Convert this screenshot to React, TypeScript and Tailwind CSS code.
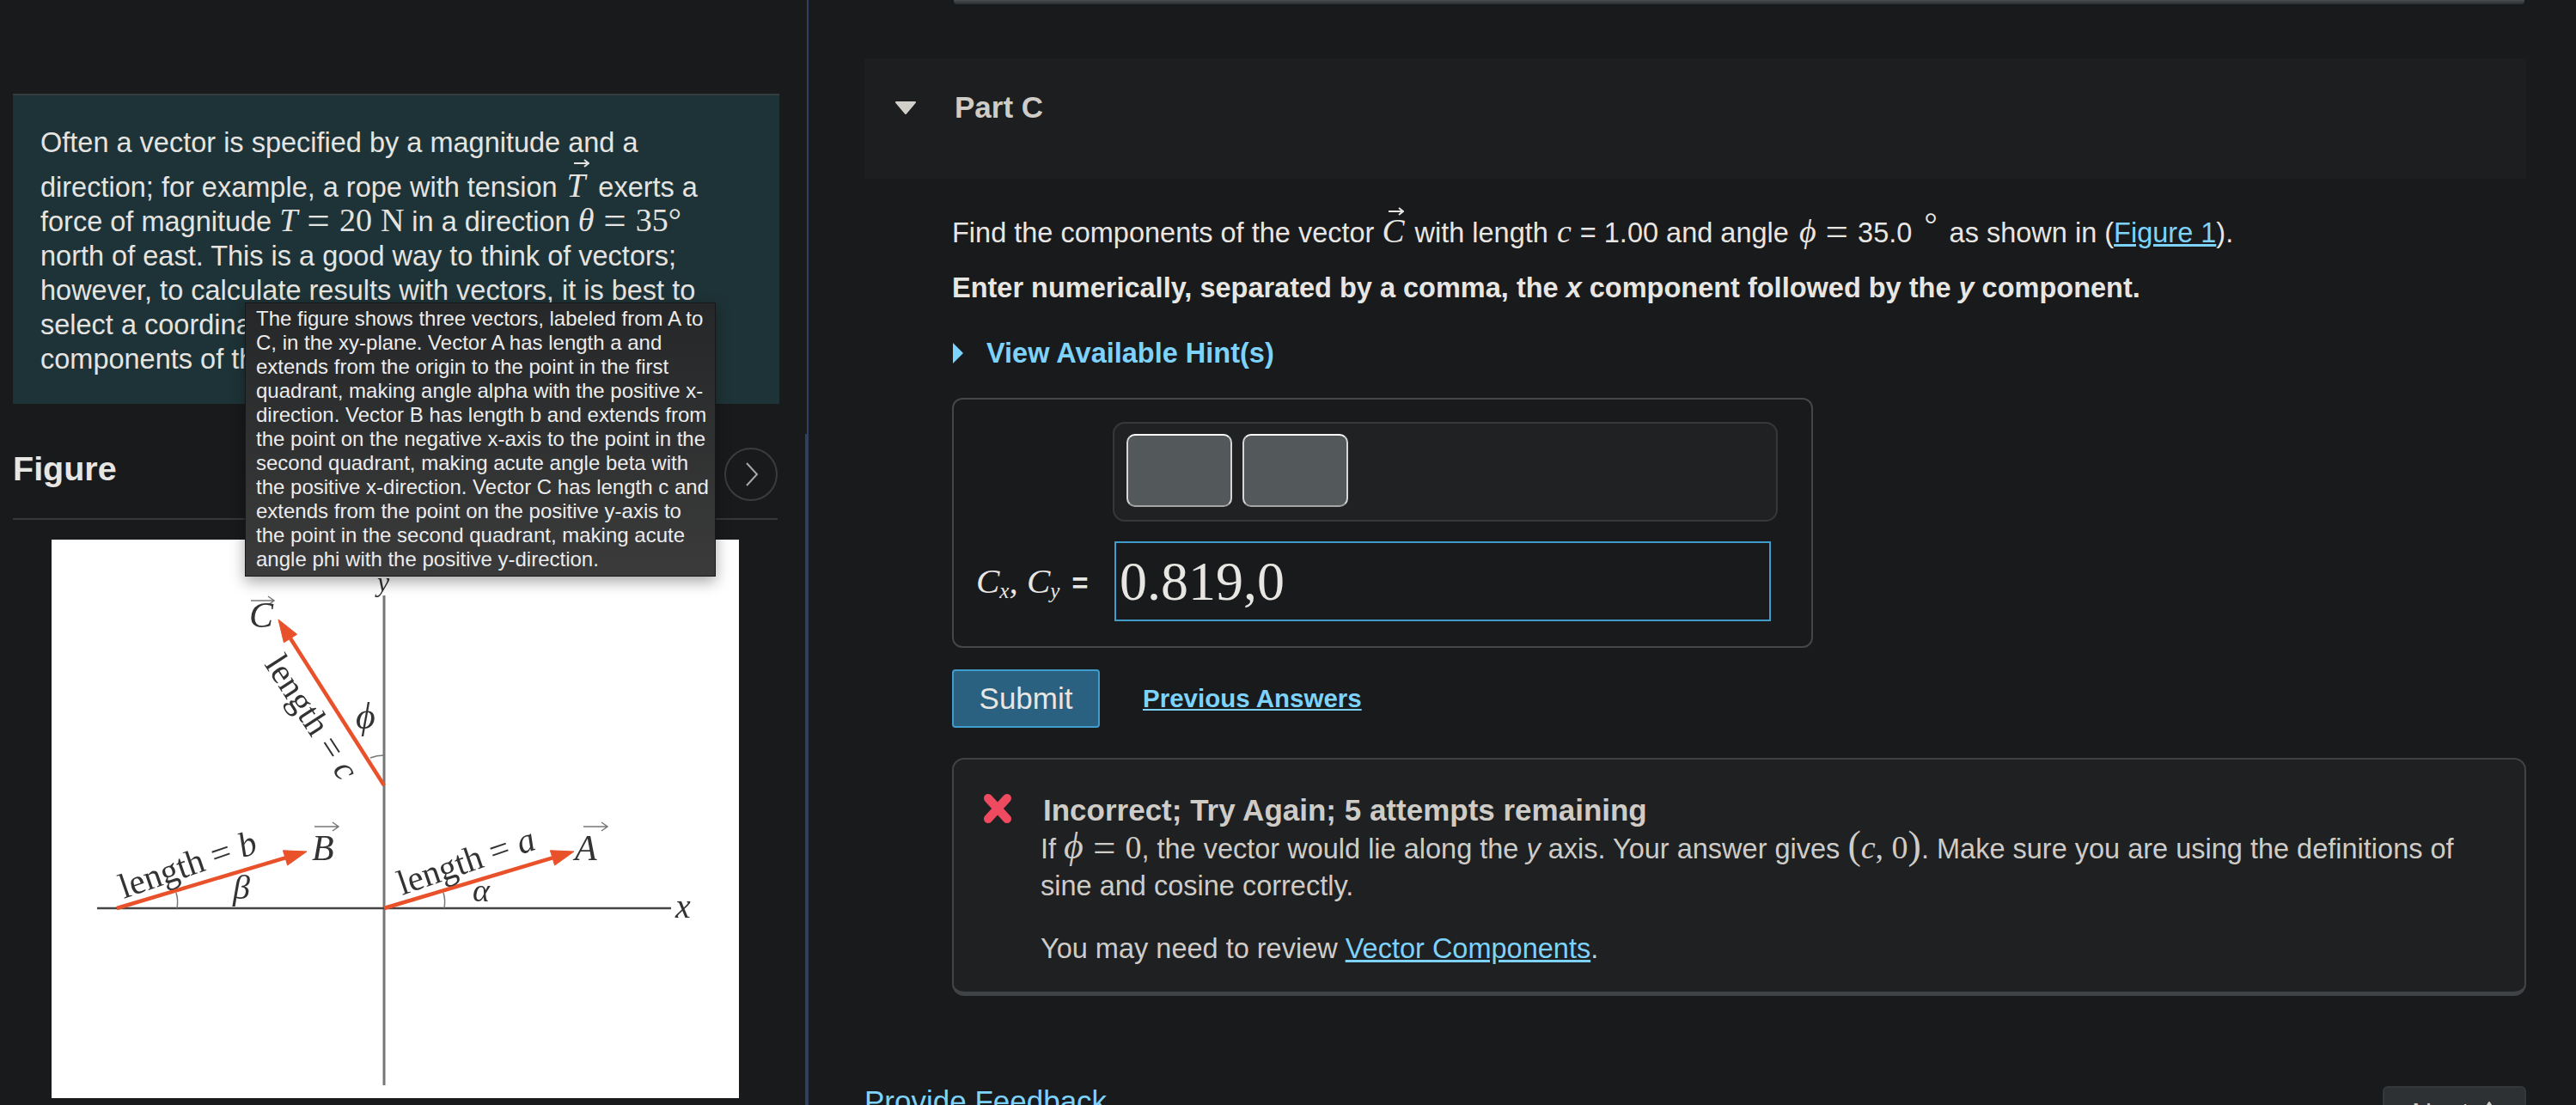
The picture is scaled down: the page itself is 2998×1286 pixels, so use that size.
import React from "react";

const Arrow: React.FC<{ className: string }> = ({ className }) => (
  <svg viewBox="0 0 18 10" className={`absolute w-[18px] h-[10px] ${className}`}>
    <path d="M0 5h16M12 1l5 4-5 4" fill="none" stroke="currentColor" strokeWidth="2" />
  </svg>
);

const Vec: React.FC<{ letter: string; className?: string; arrow: string }> = ({
  letter,
  className = "",
  arrow,
}) => (
  <span className={`relative inline-block font-['Liberation_Serif',serif] italic ${className}`}>
    {letter}
    <Arrow className={arrow} />
  </span>
);

const Serif: React.FC<{ children: React.ReactNode; className?: string }> = ({
  children,
  className = "",
}) => (
  <span className={`font-['Liberation_Serif',serif] text-[38px] leading-[30px] ${className}`}>
    {children}
  </span>
);

const Eq = () => (
  <span className="font-['Liberation_Serif',serif] text-[47px] leading-[30px] mx-[11px] align-[-3px]">=</span>
);

const Figure = () => (
  <svg viewBox="0 0 800 650" className="w-[800px] h-[650px] bg-white ml-[45px] mt-[23px] blur-[0.6px]">
    <line x1="387" y1="65" x2="387" y2="635" stroke="#777" strokeWidth="3" />
    <line x1="53" y1="429" x2="721" y2="429" stroke="#444" strokeWidth="2.5" />
    <g fill="#e8512a" stroke="#e8512a">
      <line x1="387" y1="286" x2="278" y2="115" strokeWidth="4.5" />
      <polygon points="264,93 285.6,110.2 270.4,119.8" />
      <line x1="76" y1="429" x2="272" y2="370.4" strokeWidth="4.5" />
      <polygon points="297,363 274.6,379 269.4,361.8" />
      <line x1="387" y1="429" x2="583" y2="370.4" strokeWidth="4.5" />
      <polygon points="608,363 585.6,379 580.4,361.8" />
    </g>
    <g fill="none" stroke="#777" strokeWidth="1.5">
      <path d="M146 429c1-6 1-12-1-18" />
      <path d="M457 429c1-6 1-12-1-18" />
      <path d="M371 254c5-2 11-3 16-3" />
      <path d="M232 71h26M252 66l7 5-7 5M306 334h27M327 329l7 5-7 5M619 334h27M640 329l7 5-7 5" />
    </g>
    <g fill="#333" fontFamily="'Liberation Serif', serif" fontSize="36">
      <text x="230" y="102" fontStyle="italic" fontSize="42">C</text>
      <text x="303" y="373" fontStyle="italic" fontSize="42">B</text>
      <text x="609" y="373" fontStyle="italic" fontSize="42">A</text>
      <text x="726" y="440" fontStyle="italic" fontSize="40">x</text>
      <text x="379" y="60" fontStyle="italic" fontSize="32">y</text>
      <text x="354" y="220" fontStyle="italic" fontSize="44">ϕ</text>
      <text x="211" y="418" fontStyle="italic" fontSize="40">β</text>
      <text x="490" y="421" fontStyle="italic" fontSize="38">α</text>
      <text transform="translate(247 145) rotate(57)" fontSize="41">
        length = <tspan fontStyle="italic">c</tspan>
      </text>
      <text transform="translate(84 418) rotate(-19)" fontSize="41">
        length = <tspan fontStyle="italic">b</tspan>
      </text>
      <text transform="translate(408 414) rotate(-19)" fontSize="41">
        length = <tspan fontStyle="italic">a</tspan>
      </text>
    </g>
  </svg>
);

const LeftPanel = () => (
  <div className="relative w-[939px] shrink-0 pt-[109px] pl-[15px]">
    <div className="w-[892px] h-[361px] bg-[#1e3337] border-t-2 border-[#373c3f] pt-[35px] pl-[32px] text-[32.5px] leading-[40px] text-[#e6e4e0]">
      <p className="w-[810px]">
        Often a vector is specified by a magnitude and a direction; for example, a rope with
        tension{" "}
        <Vec letter="T" className="text-[39px] pt-[10px] ml-[2px] mr-[6px]" arrow="top-[-1px] left-[8px]" /> exerts a
        force of magnitude <Serif className="italic">T</Serif>
        <Eq />
        <Serif>20</Serif>
        <Serif className="ml-[10px]">N</Serif> in a direction <Serif className="italic">θ</Serif>
        <Eq />
        <Serif>35°</Serif> north of east. This is a good way to think of vectors; however, to
        calculate results with vectors, it is best to select a coordinate
        <br />
        components of the
      </p>
    </div>
    <div className="flex items-center justify-between w-[890px] h-[135px] pt-[30px] border-b-2 border-[#35383a]">
      <h2 className="text-[39.5px] leading-[48px] font-bold text-[#e8e6e3] mb-[14px]">Figure</h2>
      <button className="flex items-center justify-center w-[62px] h-[62px] rounded-full border-2 border-[#3a3d3f]">
        <svg viewBox="0 0 16 28" className="w-[16px] h-[28px] ml-[2px]">
          <path d="M2 1l12 13L2 27" fill="none" stroke="#a8a8a8" strokeWidth="2" />
        </svg>
      </button>
    </div>
    <Figure />
    <div className="absolute left-[285px] top-[352px] w-[548px] h-[319px] border border-[#171819] bg-gradient-to-b from-[#252728] to-[#3b3b3b] pl-[12px] pr-[3px] py-[4px] text-[24px] leading-[28px] text-[#ececec] shadow-[0_6px_16px_rgba(0,0,0,0.35)]">
      The figure shows three vectors, labeled from A to C, in the xy-plane. Vector A has length a
      and extends from the origin to the point in the first quadrant, making angle alpha with the
      positive x-direction. Vector B has length b and extends from the point on the negative x-axis
      to the point in the second quadrant, making acute angle beta with the positive x-direction.
      Vector C has length c and extends from the point on the positive y-axis to the point in the
      second quadrant, making acute angle phi with the positive y-direction.
    </div>
  </div>
);

const AnswerBox = () => (
  <div className="w-[1002px] h-[291px] mt-[32px] rounded-[12px] border-2 border-[#444749] pt-[26px]">
    <div className="ml-[185px] w-[774px] h-[116px] rounded-[14px] border-2 border-[#363839] bg-[#1f2123] pl-[14px] pt-[12px] flex gap-[12px]">
      <div className="w-[123px] h-[85px] rounded-[10px] border-2 border-t-white border-x-[#d5d5d5] border-b-[#a5a5a5] bg-[#53585b]" />
      <div className="w-[123px] h-[85px] rounded-[10px] border-2 border-t-white border-x-[#d5d5d5] border-b-[#a5a5a5] bg-[#53585b]" />
    </div>
    <div className="flex items-center mt-[23px] pl-[26px]">
      <div className="w-[161px] text-[32.5px] text-[#e8e6e3] whitespace-nowrap">
        <span className="font-['Liberation_Serif',serif] italic text-[41px]">
          C<sub className="text-[25px]">x</sub>, C<sub className="text-[25px]">y</sub>
        </span>
        <span className="ml-[14px] font-bold">=</span>
      </div>
      <div className="w-[764px] h-[93px] border-2 border-[#3f9ccb] pl-[4px] flex items-center font-['Liberation_Serif',serif] text-[64px] text-[#e8e6e3]">
        0.819,0
      </div>
    </div>
  </div>
);

const Feedback = () => (
  <div className="w-[1832px] h-[277px] mt-[35px] rounded-[14px] border-2 border-b-[5px] border-[#404346] bg-[#1e2022] pt-[39px] pl-[34px] flex gap-[33px]">
    <svg viewBox="0 0 34 34" className="w-[34px] h-[34px] mt-[1px] shrink-0">
      <path d="M6 5l22 24M28 5L6 29" stroke="#ef4a5f" strokeWidth="10" strokeLinecap="round" />
    </svg>
    <div className="text-[32.5px] leading-[43px] text-[#cfccc7]">
      <h3 className="ml-[3px] text-[35px] leading-[40px] font-bold mb-[4px]">
        Incorrect; Try Again; 5 attempts remaining
      </h3>
      <p className="w-[1670px]">
        If <Serif className="italic text-[44px]">ϕ</Serif>
        <Eq />
        <Serif>0</Serif>, the vector would lie along the <i>y</i> axis. Your answer gives{" "}
        <Serif>
          <span className="text-[46px] font-light">(</span>
          <i>c</i>, 0<span className="text-[46px] font-light">)</span>
        </Serif>
        . Make sure you are using the definitions of sine and cosine correctly.
      </p>
      <p className="mt-[30px]">
        You may need to review <a className="text-[#7dd3fc] underline">Vector Components</a>.
      </p>
    </div>
  </div>
);

const RightPanel = () => (
  <div className="flex-1 border-l-2 border-[#2e405e] relative">
    <div className="absolute -left-[4px] top-[505px] bottom-0 w-[2px] bg-[#2e405e]" />
    <div className="w-[1828px] h-[5px] ml-[169px] rounded-b-[4px] bg-gradient-to-b from-[#4a4e50] to-[#2a2d2f]" />
    <div className="ml-[65px] mt-[63px] w-[1934px] h-[140px] bg-[#1c1e20] flex items-center pb-[26px] pl-[35px]">
      <svg viewBox="0 0 26 16" className="w-[26px] h-[16px]">
        <path d="M2 2h22L13 15z" fill="#d2cfca" stroke="#d2cfca" strokeWidth="2" strokeLinejoin="round" />
      </svg>
      <span className="ml-[44px] text-[35px] font-bold text-[#cfccc7] leading-[40px]">Part C</span>
    </div>
    <div className="ml-[167px]">
      <p className="mt-[41px] h-[40px] text-[32.5px] leading-[40px] text-[#e8e6e3] whitespace-nowrap">
        Find the components of the vector{" "}
        <Vec letter="C" className="text-[39px] leading-[40px] mr-[3px]" arrow="top-[-8px] left-[8px]" /> with length{" "}
        <Serif className="italic mx-[1px]">c</Serif> = 1.00 and angle <Serif className="italic ml-[3px]">ϕ</Serif>
        <Eq />
        35.0 <Serif className="relative top-[-8px] mx-[5px]">°</Serif> as shown in (
        <a className="text-[#7dd3fc] underline">Figure 1</a>).
      </p>
      <p className="mt-[26px] h-[40px] text-[32.5px] leading-[40px] font-bold text-[#e8e6e3] whitespace-nowrap">
        Enter numerically, separated by a comma, the <i>x</i> component followed by the <i>y</i>{" "}
        component.
      </p>
      <div className="mt-[36px] h-[40px] flex items-center gap-[26px] text-[32.5px] font-bold text-[#7dd3fc]">
        <svg viewBox="0 0 14 26" className="w-[14px] h-[26px]">
          <path d="M1 1l12 12L1 25z" fill="#7dd3fc" />
        </svg>
        View Available Hint(s)
      </div>
      <AnswerBox />
      <div className="flex items-center mt-[25px]">
        <button className="w-[172px] h-[68px] rounded-[4px] border-2 border-[#3f9ccb] bg-[#2a6080] text-[35px] text-[#e8e6e3]">
          Submit
        </button>
        <a className="ml-[50px] text-[29.5px] font-bold text-[#7dd3fc] underline">Previous Answers</a>
      </div>
      <Feedback />
    </div>
    <div className="flex justify-between items-start ml-[65px] w-[1934px] mt-[103px] text-[35px] leading-[40px]">
      <a className="text-[#7dd3fc]">Provide Feedback</a>
      <button className="flex items-start gap-[14px] w-[167px] h-[60px] mt-[2px] pl-[32px] pt-[10px] rounded-[6px] bg-[#2d3133] border-2 border-[#34383a] text-[32.5px] text-[#cfccc7]">
        Next
        <svg viewBox="0 0 18 14" className="w-[18px] h-[14px] mt-[5px]">
          <path d="M9 2l7 11H2z" fill="#cfccc7" stroke="#cfccc7" strokeWidth="2" strokeLinejoin="round" />
        </svg>
      </button>
    </div>
  </div>
);

export default function App() {
  return (
    <div className="flex w-[2998px] h-[1286px] overflow-hidden bg-[#191a1c] font-['Liberation_Sans',Arial,sans-serif]">
      <LeftPanel />
      <RightPanel />
    </div>
  );
}
